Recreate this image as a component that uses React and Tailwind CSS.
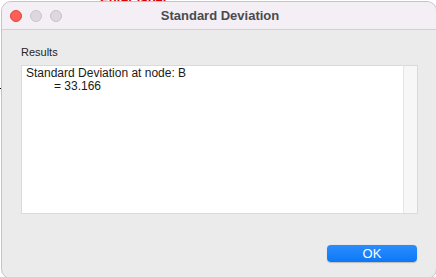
export default function App() {
  return (
    <div className="relative h-[277px] w-[436px] overflow-hidden bg-white font-['Liberation_Sans',Arial,sans-serif]">
      {/* bits of the window behind */}
      <div className="absolute left-[100px] top-[-10px] text-[13px] font-bold text-[#d40000]">Enter label</div>
      <div className="absolute left-0 top-[88px] h-px w-[3px] bg-black" />

      <div className="relative z-10 ml-[1px] mt-[1px] flex h-[278px] w-[436px] flex-col overflow-hidden rounded-[10px] border border-[#c4c4c4] bg-[#ebebeb]">
        <div className="relative flex h-[28px] shrink-0 items-center border-b border-[#d2d0d3] bg-[#f4eef5]">
          <div className="flex items-center gap-[8px] pl-[8px]">
            <span className="h-[12px] w-[12px] rounded-full border border-[#e0443e] bg-[#fe5f57]" />
            <span className="h-[12px] w-[12px] rounded-full border border-[#c8c4c9] bg-[#dcd8dd]" />
            <span className="h-[12px] w-[12px] rounded-full border border-[#c8c4c9] bg-[#dcd8dd]" />
          </div>
          <div className="absolute inset-0 flex items-center justify-center pl-[2px] text-[13px] font-bold text-[#4b4a4c]">
            Standard Deviation
          </div>
        </div>

        <div className="flex flex-1 flex-col px-[19px] pt-[15px]">
          <div className="text-[11px] leading-[14px] text-[#262626]">Results</div>
          <div className="mt-[6px] flex h-[149px] w-[397px] border border-[#dadada] bg-white">
            <div className="flex-1 pl-[4px] pt-[1px] text-[12px] leading-[13px] text-[#1a1a1a]">
              <div>Standard Deviation at node: B</div>
              <div className="pl-[28px]">= 33.166</div>
            </div>
            <div className="w-[14px] border-l border-[#e6e6e6] bg-[#f7f7f7]" />
          </div>
          <div className="mt-[31px] flex justify-end pr-[0px]">
            <button className="flex h-[17px] w-[90px] items-center justify-center rounded-[4px] bg-gradient-to-b from-[#2a8dff] to-[#0a78f5] text-[13px] leading-none text-white shadow-[0_0.5px_1px_rgba(0,0,0,0.2)]">
              OK
            </button>
          </div>
        </div>
      </div>
    </div>
  );
}
